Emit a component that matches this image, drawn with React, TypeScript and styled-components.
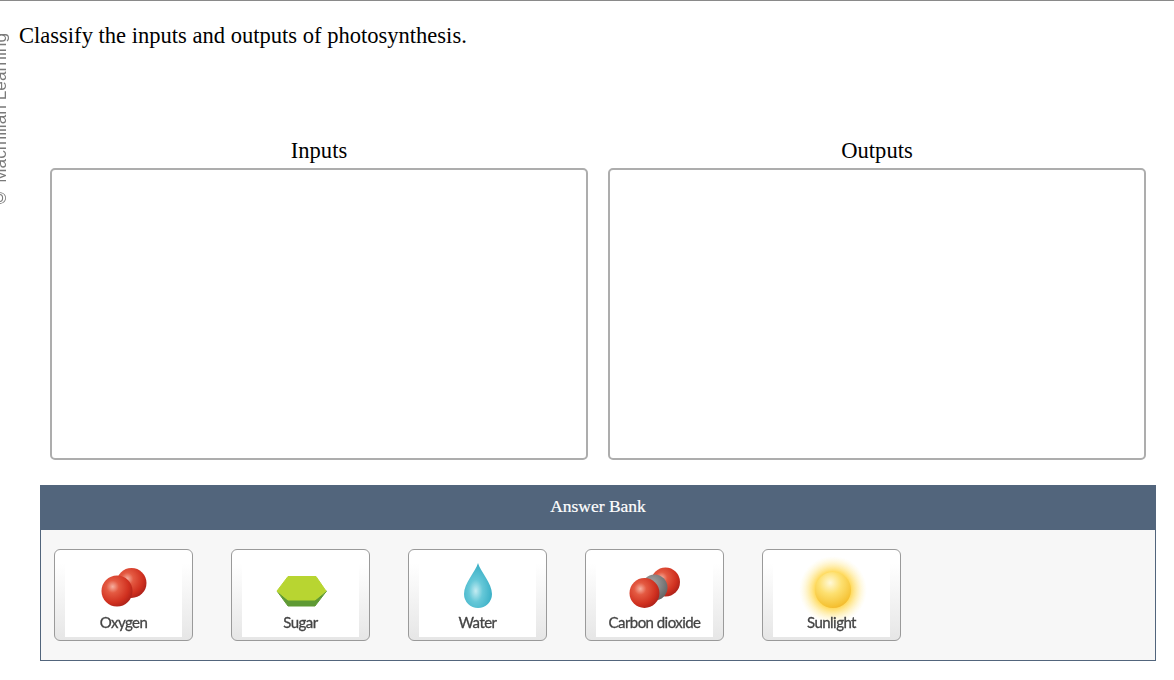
import React from "react";
import styled, { createGlobalStyle } from "styled-components";

const Global = createGlobalStyle`
  html, body { margin: 0; padding: 0; background: #fff; }
`;

const Page = styled.div`
  position: relative;
  width: 1174px;
  height: 680px;
  box-sizing: border-box;
  overflow: hidden;
  border-top: 1px solid #8a8a8a;
  font-family: "Liberation Serif", "Times New Roman", serif;
  color: #000;
`;

const Credit = styled.div`
  position: absolute;
  left: -9px;
  bottom: 472px;
  writing-mode: vertical-rl;
  transform: rotate(180deg);
  font-family: "Liberation Sans", Arial, sans-serif;
  font-size: 17.3px;
  line-height: 18px;
  color: #7a7a7a;
  white-space: nowrap;
`;

const Title = styled.h1`
  margin: 0;
  padding: 21px 0 0 19px;
  font-size: 22.55px;
  line-height: 28px;
  font-weight: 400;
`;

const Bins = styled.div`
  display: grid;
  grid-template-columns: 538px 538px;
  gap: 20px;
  margin: 86px 0 0 50px;
`;

const Bin = styled.section`
  display: flex;
  flex-direction: column;
`;

const BinTitle = styled.div`
  height: 32px;
  padding-top: 1px;
  box-sizing: border-box;
  text-align: center;
  font-size: 22.55px;
  line-height: 28px;
`;

const DropZone = styled.div`
  box-sizing: border-box;
  height: 292px;
  border: 2px solid #adadad;
  border-radius: 5px;
  background: #fff;
`;

const Bank = styled.section`
  box-sizing: border-box;
  width: 1116px;
  height: 176px;
  margin: 25px 0 0 40px;
  border: 1px solid #52657c;
  border-top: 0;
  background: #f7f7f7;
`;

const BankHeader = styled.div`
  height: 45px;
  margin: 0 -1px;
  background: #52657c;
  color: #fff;
  text-align: center;
  font-size: 17.5px;
  line-height: 43px;
  -webkit-text-stroke: 0.2px #fff;
`;

const Cards = styled.div`
  display: flex;
  gap: 38px;
  padding: 19px 0 0 13px;
`;

const Card = styled.div`
  box-sizing: border-box;
  width: 139px;
  height: 92px;
  padding: 0 10px 3px;
  border: 1px solid #9a9a9a;
  border-radius: 6px;
  background: linear-gradient(#fff 15%, #e6e6e6);
`;

const CardFace = styled.div`
  height: 100%;
  display: flex;
  flex-direction: column;
  align-items: center;
  padding-top: 8px;
  box-sizing: border-box;
  background: #fff;
`;

const Art = styled.svg`
  display: block;
  width: 73px;
  height: 60px;
  overflow: visible;
  flex: none;
  filter: blur(0.5px);
`;

const CardLabel = styled.div`
  position: relative;
  margin-top: -6px;
  font-family: Lato, "Open Sans", sans-serif;
  font-size: 15px;
  font-weight: 400;
  line-height: 20px;
  letter-spacing: -0.55px;
  color: #444;
  white-space: nowrap;
  -webkit-text-stroke: 0.3px #444;
  filter: blur(0.3px);
`;

const Defs = () => (
  <svg width="0" height="0" style={{ position: "absolute" }}>
    <defs>
      <radialGradient id="red" cx="0.36" cy="0.36" r="0.72">
        <stop offset="0" stopColor="#f6b0a0" />
        <stop offset="0.28" stopColor="#e45a42" />
        <stop offset="0.72" stopColor="#d0301f" />
        <stop offset="1" stopColor="#a82019" />
      </radialGradient>
      <radialGradient id="grey" cx="0.4" cy="0.35" r="0.7">
        <stop offset="0" stopColor="#a8a8a8" />
        <stop offset="1" stopColor="#626262" />
      </radialGradient>
      <radialGradient id="drop" cx="0.42" cy="0.62" r="0.55">
        <stop offset="0" stopColor="#c4ecf2" />
        <stop offset="0.45" stopColor="#66c8d8" />
        <stop offset="1" stopColor="#3fb2c8" />
      </radialGradient>
      <radialGradient id="glow">
        <stop offset="0.5" stopColor="#ffd54a" />
        <stop offset="0.7" stopColor="#ffe68a" stopOpacity="0.7" />
        <stop offset="1" stopColor="#fff6cc" stopOpacity="0" />
      </radialGradient>
      <radialGradient id="sun" cx="0.42" cy="0.3" r="0.78">
        <stop offset="0" stopColor="#fff9d8" />
        <stop offset="0.4" stopColor="#fde070" />
        <stop offset="0.85" stopColor="#f5c234" />
        <stop offset="1" stopColor="#edaa2c" />
      </radialGradient>
    </defs>
  </svg>
);

const Oxygen = () => (
  <Art viewBox="0 0 73 60">
    <circle cx="44.500" cy="25" r="15" fill="url(#red)" />
    <circle cx="30" cy="33" r="15.500" fill="url(#red)" />
  </Art>
);

const Sugar = () => (
  <Art viewBox="0 0 73 60">
    <path d="M13 33L24 48H51L62.500 33L51 42H24Z" fill="#5f9a35" stroke="#5f9a35" strokeLinejoin="round" />
    <path d="M24 18.500H52L62 33L51 42H24L13 33Z" fill="#b8d531" stroke="#b8d531" strokeLinejoin="round" />
  </Art>
);

const Water = () => (
  <Art viewBox="0 0 73 60">
    <path d="M37 5C34.500 14 23 25 23 36a14 14 0 0 0 28 0C51 25 39.500 14 37 5Z" fill="url(#drop)" />
  </Art>
);

const CarbonDioxide = () => (
  <Art viewBox="0 0 73 60">
    <circle cx="47.500" cy="24" r="14.500" fill="url(#red)" />
    <circle cx="36.500" cy="29.500" r="13" fill="url(#grey)" />
    <circle cx="26.500" cy="35" r="15" fill="url(#red)" />
  </Art>
);

const Sunlight = () => (
  <Art viewBox="0 0 73 60">
    <circle cx="38" cy="32" r="34" fill="url(#glow)" />
    <circle cx="38" cy="32" r="18" fill="url(#sun)" />
  </Art>
);

const items = [
  { label: "Oxygen", Icon: Oxygen },
  { label: "Sugar", Icon: Sugar },
  { label: "Water", Icon: Water },
  { label: "Carbon dioxide", Icon: CarbonDioxide },
  { label: "Sunlight", Icon: Sunlight },
];

export default function App() {
  return (
    <Page>
      <Global />
      <Defs />
      <Credit>© Macmillan Learning</Credit>
      <Title>Classify the inputs and outputs of photosynthesis.</Title>
      <Bins>
        <Bin>
          <BinTitle>Inputs</BinTitle>
          <DropZone />
        </Bin>
        <Bin>
          <BinTitle>Outputs</BinTitle>
          <DropZone />
        </Bin>
      </Bins>
      <Bank>
        <BankHeader>Answer Bank</BankHeader>
        <Cards>
          {items.map(({ label, Icon }) => (
            <Card key={label}>
              <CardFace>
                <Icon />
                <CardLabel>{label}</CardLabel>
              </CardFace>
            </Card>
          ))}
        </Cards>
      </Bank>
    </Page>
  );
}
